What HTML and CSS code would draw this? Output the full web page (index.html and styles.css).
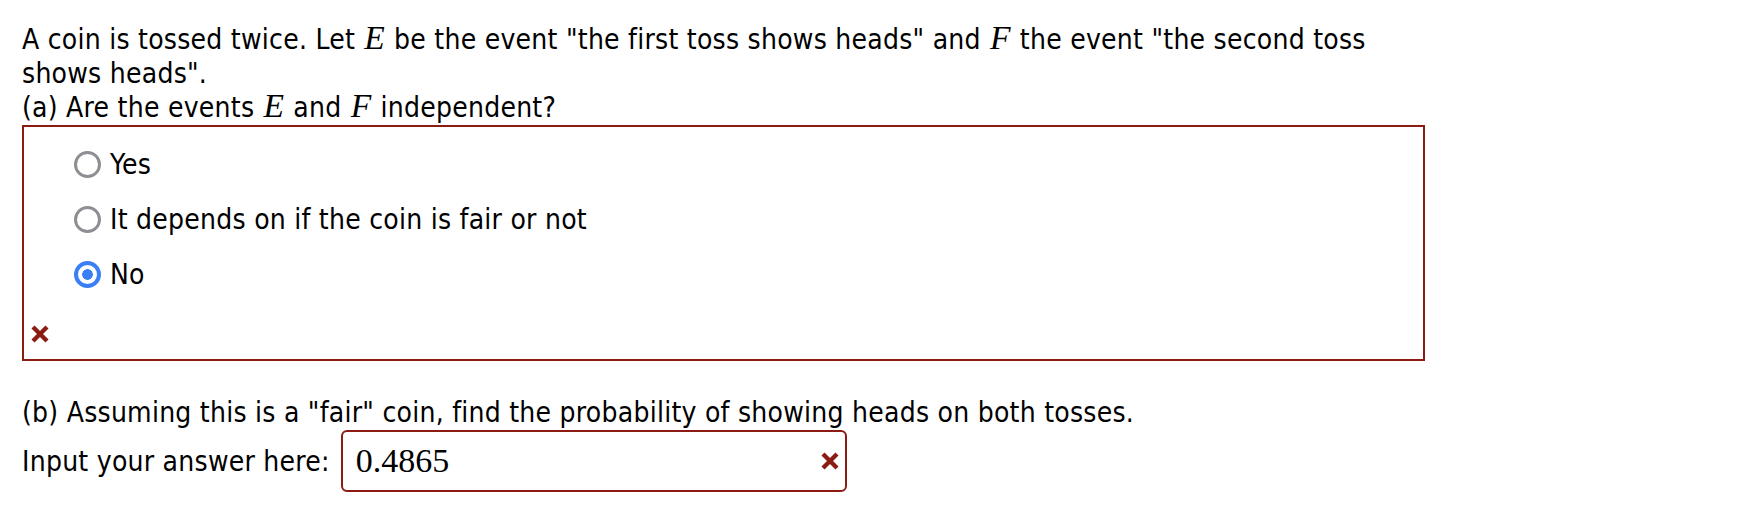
FILE: index.html
```html
<!DOCTYPE html>
<html lang="en">
<head>
<meta charset="utf-8">
<title>Coin toss question</title>
<link rel="stylesheet" href="styles.css">
</head>
<body>
<div class="page">
  <p class="intro">A coin is tossed twice. Let <span class="m">E</span> be the event "the first toss shows heads" and <span class="m">F</span> the event "the second toss shows heads".<br>(a) Are the events <span class="m">E</span> and <span class="m">F</span> independent?</p>
  <div class="answer-box">
    <ul class="options">
      <li class="option"><input type="radio" name="q1" class="radio"><span>Yes</span></li>
      <li class="option"><input type="radio" name="q1" class="radio"><span>It depends on if the coin is fair or not</span></li>
      <li class="option"><input type="radio" name="q1" class="radio" checked><span>No</span></li>
    </ul>
    <div class="feedback">
      <svg class="x-icon" width="18" height="18" viewBox="0 0 18 18"><path d="M2 2 L16 16 M16 2 L2 16" /></svg>
    </div>
  </div>
  <p class="part-b">(b) Assuming this is a "fair" coin, find the probability of showing heads on both tosses.</p>
  <div class="input-row">
    <span class="label">Input your answer here:</span>
    <div class="answer-input">
      <span class="value">0.4865</span>
      <svg class="x-icon" width="18" height="18" viewBox="0 0 18 18"><path d="M2 2 L16 16 M16 2 L2 16" /></svg>
    </div>
  </div>
</div>
</body>
</html>
```
FILE: styles.css
```css
body {
  margin: 0;
  background: #ffffff;
  color: #000000;
  font-family: "DejaVu Sans Condensed", "DejaVu Sans", sans-serif;
  font-size: 28px;
  letter-spacing: 0.25px;
}

.page {
  padding: 23px 0 0 22px;
  width: 1403px;
}

.intro {
  margin: 0;
  line-height: 34px;
}

.m {
  font-family: "Liberation Serif", serif;
  font-style: italic;
  font-size: 1.2em;
  line-height: 20px;
  letter-spacing: 0;
  margin: 0 1px;
}

.answer-box {
  box-sizing: border-box;
  height: 236px;
  border: 2px solid #8c1c13;
}

.options {
  list-style: none;
  margin: 0;
  padding: 10px 0 0 50px;
}

.option {
  height: 55px;
  display: flex;
  align-items: center;
  gap: 9px;
}

.radio {
  appearance: none;
  -webkit-appearance: none;
  box-sizing: border-box;
  width: 27px;
  height: 27px;
  margin: 0;
  border: 3px solid #8e8e93;
  border-radius: 50%;
  background: #ffffff;
  flex: none;
}

.radio:checked {
  border: 4px solid #3b7ff5;
  background: radial-gradient(circle, #3b7ff5 0, #3b7ff5 5px, #ffffff 5.6px);
}

.feedback {
  margin-top: 15px;
  height: 34px;
  padding-left: 7px;
  display: flex;
  align-items: center;
}

.x-icon path {
  fill: none;
  stroke: #8c1c13;
  stroke-width: 4.3;
}

.part-b {
  margin: 35px 0 0;
  line-height: 34px;
}

.input-row {
  display: flex;
  align-items: center;
  gap: 11px;
}

.answer-input {
  box-sizing: border-box;
  width: 506px;
  height: 62px;
  border: 2px solid #8c1c13;
  border-radius: 6px;
  padding: 0 6px 0 13px;
  display: flex;
  align-items: center;
  justify-content: space-between;
}

.value {
  font-family: "Liberation Serif", serif;
  font-size: 34px;
  letter-spacing: 0;
}
```
